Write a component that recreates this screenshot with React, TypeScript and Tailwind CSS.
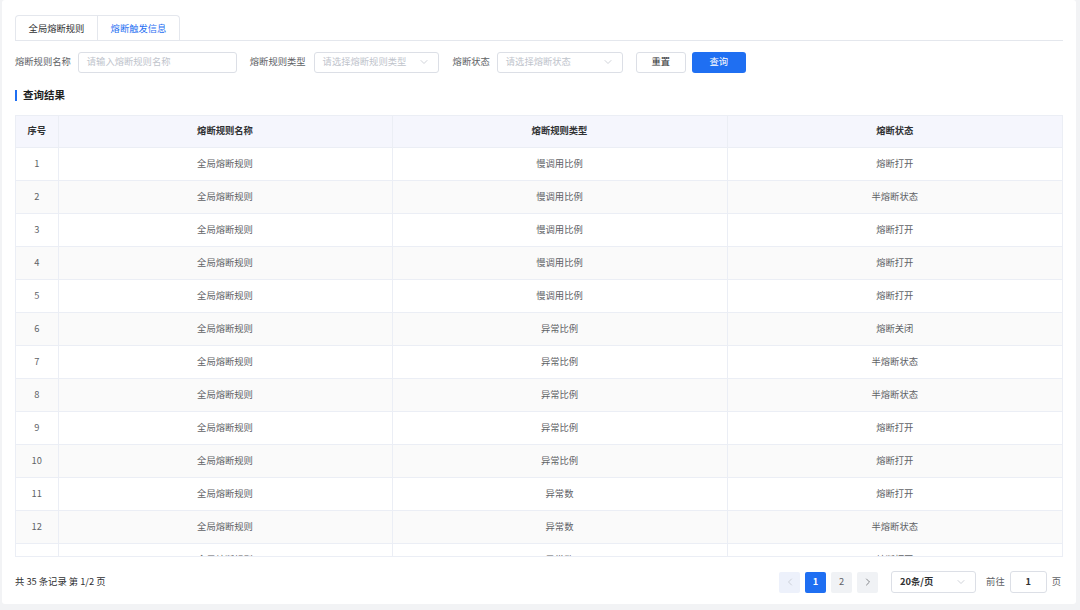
import { ChevronDown, ChevronLeft, ChevronRight } from "lucide-react";

const rows = [
  ["慢调用比例", "熔断打开"],
  ["慢调用比例", "半熔断状态"],
  ["慢调用比例", "熔断打开"],
  ["慢调用比例", "熔断打开"],
  ["慢调用比例", "熔断打开"],
  ["异常比例", "熔断关闭"],
  ["异常比例", "半熔断状态"],
  ["异常比例", "半熔断状态"],
  ["异常比例", "熔断打开"],
  ["异常比例", "熔断打开"],
  ["异常数", "熔断打开"],
  ["异常数", "半熔断状态"],
  ["异常数", "熔断打开"],
];

const font = { fontFamily: '"Noto Sans CJK SC", "Noto Sans", sans-serif' };

const Select = ({ placeholder, width }: { placeholder: string; width: string }) => (
  <div
    className={`${width} h-[21px] flex items-center justify-between px-2 border border-[#dcdfe6] rounded-[3px] bg-white`}
  >
    <span className="text-[9.3px] text-[#c0c4cc]">{placeholder}</span>
    <ChevronDown className="h-3 w-3 text-[#c0c4cc]" strokeWidth={1.5} />
  </div>
);

const App = () => {
  return (
    <div
      className="w-[1080px] h-[610px] bg-[#f2f3f5] pl-[2px] pr-[4px] pb-[6px] text-[#333]"
      style={font}
    >
      <div className="h-full bg-white rounded-[3px] px-[13px] pt-[15px] flex flex-col">
        {/* tabs */}
        <div className="flex border-b border-[#e4e7ed] h-[26px]">
          <div className="w-[83px] h-[26px] flex items-center justify-center border border-b-0 border-[#e4e7ed] rounded-tl-[4px] text-[9.3px] text-[#303133]">
            全局熔断规则
          </div>
          <div className="w-[82px] h-[26px] flex items-center justify-center border border-l-0 border-b-0 border-[#e4e7ed] rounded-tr-[4px] text-[9.3px] text-[#1f6ff2]">
            熔断触发信息
          </div>
        </div>

        {/* filters */}
        <div className="flex items-center mt-[10px] h-[22px]">
          <span className="text-[9.3px] text-[#606266]">熔断规则名称</span>
          <div className="ml-[7px] w-[159px] h-[21px] flex items-center px-2 border border-[#dcdfe6] rounded-[3px]">
            <span className="text-[9.3px] text-[#c0c4cc]">请输入熔断规则名称</span>
          </div>
          <span className="ml-[13px] text-[9.3px] text-[#606266]">熔断规则类型</span>
          <div className="ml-[8px]">
            <Select placeholder="请选择熔断规则类型" width="w-[125px]" />
          </div>
          <span className="ml-[14px] text-[9.3px] text-[#606266]">熔断状态</span>
          <div className="ml-[7px]">
            <Select placeholder="请选择熔断状态" width="w-[126px]" />
          </div>
          <button className="ml-[13px] w-[50px] h-[21px] border border-[#dcdfe6] rounded-[3px] text-[9.3px] text-[#303133] bg-white">
            重置
          </button>
          <button className="ml-[6px] w-[54px] h-[21px] rounded-[3px] text-[9.3px] text-white bg-[#1f6ff2]">
            查询
          </button>
        </div>

        {/* title */}
        <div className="flex items-center mt-[15px] h-[14px]">
          <span className="w-[2px] h-[11px] bg-[#1f6ff2]" />
          <span className="ml-[6px] text-[10.5px] font-bold text-[#1f1f1f]">查询结果</span>
        </div>

        {/* table */}
        <div className="mt-[13px] h-[442px] overflow-hidden border border-[#ebeef5]">
          <table className="w-full border-collapse table-fixed">
            <colgroup>
              <col className="w-[42px]" />
              <col className="w-[334px]" />
              <col className="w-[335px]" />
              <col />
            </colgroup>
            <thead>
              <tr className="h-[31px] bg-[#f5f6fd]">
                {["序号", "熔断规则名称", "熔断规则类型", "熔断状态"].map((h, i) => (
                  <th
                    key={h}
                    className={`text-[9.3px] font-bold text-[#303133] border-b border-[#ebeef5] ${
                      i < 3 ? "border-r" : ""
                    }`}
                  >
                    {h}
                  </th>
                ))}
              </tr>
            </thead>
            <tbody>
              {rows.map(([type, status], i) => (
                <tr key={i} className={`h-[33px] ${i % 2 === 1 ? "bg-[#fafafa]" : "bg-white"}`}>
                  {[String(i + 1), "全局熔断规则", type, status].map((c, j) => (
                    <td
                      key={j}
                      className={`text-center text-[9.3px] text-[#606266] border-b border-[#ebeef5] ${
                        j < 3 ? "border-r" : ""
                      }`}
                    >
                      {c}
                    </td>
                  ))}
                </tr>
              ))}
            </tbody>
          </table>
        </div>

        {/* footer */}
        <div className="flex items-center justify-between mt-[14px] h-[22px]">
          <span className="text-[9.3px] text-[#303133]">共 35 条记录 第 1/2 页</span>
          <div className="flex items-center">
            <div className="w-[21px] h-[21px] rounded-[2px] bg-[#edf1fb] flex items-center justify-center">
              <ChevronLeft className="h-3 w-3 text-[#c0c4cc]" strokeWidth={1.5} />
            </div>
            <div className="ml-[5px] w-[21px] h-[21px] rounded-[2px] bg-[#1f6ff2] flex items-center justify-center text-[9.3px] font-bold text-white">
              1
            </div>
            <div className="ml-[5px] w-[21px] h-[21px] rounded-[2px] bg-[#f0f2f5] flex items-center justify-center text-[9.3px] text-[#606266]">
              2
            </div>
            <div className="ml-[5px] w-[21px] h-[21px] rounded-[2px] bg-[#f0f2f5] flex items-center justify-center">
              <ChevronRight className="h-3 w-3 text-[#606266]" strokeWidth={1.5} />
            </div>
            <div className="ml-[13px] w-[85px] h-[22px] flex items-center justify-between px-2 border border-[#dcdfe6] rounded-[3px]">
              <span className="text-[9.3px] font-bold text-[#303133]">20条/页</span>
              <ChevronDown className="h-3 w-3 text-[#c0c4cc]" strokeWidth={1.5} />
            </div>
            <span className="ml-[10px] text-[9.3px] text-[#606266]">前往</span>
            <div className="ml-[5px] w-[37px] h-[22px] flex items-center justify-center border border-[#dcdfe6] rounded-[3px] text-[9.3px] font-bold text-[#303133]">
              1
            </div>
            <span className="ml-[5px] mr-[2px] text-[9.3px] text-[#606266]">页</span>
          </div>
        </div>
      </div>
    </div>
  );
};

export default App;
